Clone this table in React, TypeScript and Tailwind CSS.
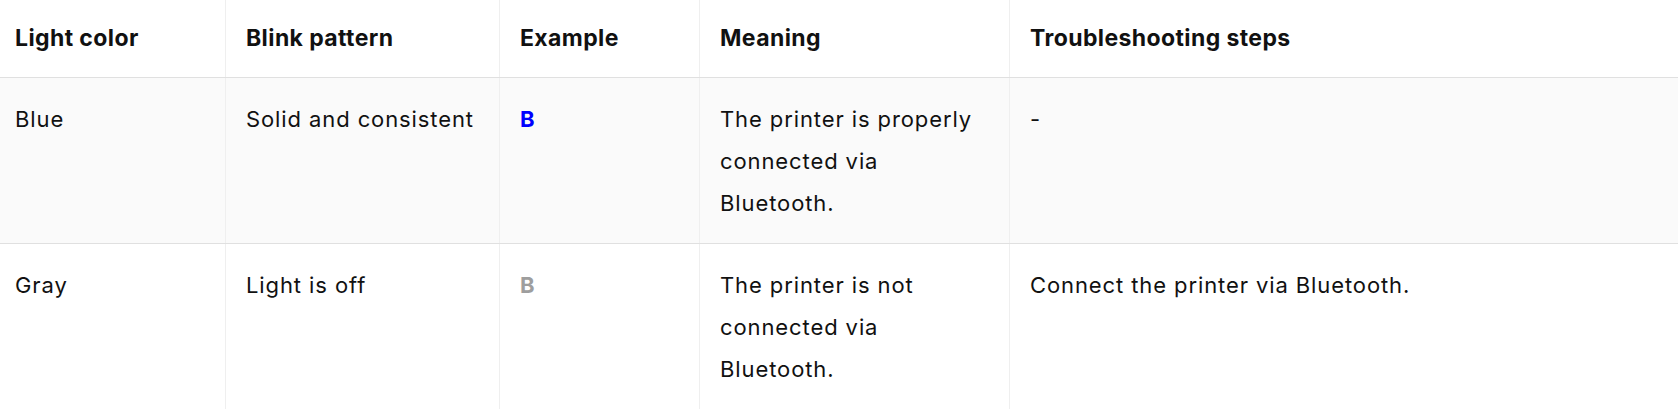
import React from "react";

const cols = "grid grid-cols-[226px_274px_200px_310px_1fr]";

function Cell({ children, first, last, header }: { children?: React.ReactNode; first?: boolean; last?: boolean; header?: boolean }) {
  return (
    <div
      className={
        (first ? "pl-[15px] pr-[20px] " : "px-[20px] ") +
        (last ? "" : "border-r border-[#efefef] ") +
        (header
          ? "flex items-center h-[77px] font-bold text-[23px] tracking-[0.4px]"
          : "pt-[20px] pb-[19px] text-[22px] leading-[42px] tracking-[0.9px]")
      }
    >
      {children}
    </div>
  );
}

export default function App() {
  const rows = [
    {
      color: "Blue",
      pattern: "Solid and consistent",
      ex: <span className="font-bold text-[#0000ff]">B</span>,
      meaning: ["The printer is properly", "connected via", "Bluetooth."],
      steps: "-",
      bg: "bg-[#fafafa]",
      border: "border-b border-[#e0e0e0]",
    },
    {
      color: "Gray",
      pattern: "Light is off",
      ex: <span className="font-bold text-[#9e9e9e]">B</span>,
      meaning: ["The printer is not", "connected via", "Bluetooth."],
      steps: "Connect the printer via Bluetooth.",
      bg: "bg-white",
      border: "",
    },
  ];
  return (
    <div className="w-[1678px] h-[410px] overflow-hidden bg-white text-[#111111]" style={{ fontFamily: "Inter, 'Noto Sans', sans-serif" }}>
      <div className={cols + " border-b border-[#e0e0e0]"}>
        <Cell first header>Light color</Cell>
        <Cell header>Blink pattern</Cell>
        <Cell header>Example</Cell>
        <Cell header>Meaning</Cell>
        <Cell header last>Troubleshooting steps</Cell>
      </div>
      {rows.map((r) => (
        <div key={r.color} className={cols + " " + r.border + " " + r.bg}>
          <Cell first>{r.color}</Cell>
          <Cell>{r.pattern}</Cell>
          <Cell>{r.ex}</Cell>
          <Cell>
            {r.meaning.map((m) => (
              <div key={m}>{m}</div>
            ))}
          </Cell>
          <Cell last>{r.steps}</Cell>
        </div>
      ))}
    </div>
  );
}
